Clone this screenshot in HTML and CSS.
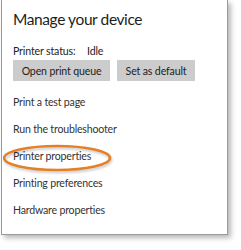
FILE: index.html
```html
<!DOCTYPE html>
<html>
<head>
<meta charset="utf-8">
<link rel="stylesheet" href="styles.css">
</head>
<body>
<div class="card">
  <h1 class="title">Manage your device</h1>
  <div class="status"><span class="status-label">Printer status:</span><span>Idle</span></div>
  <div class="buttons">
    <button class="btn btn-queue">Open print queue</button>
    <button class="btn btn-default">Set as default</button>
  </div>
  <ul class="links">
    <li>Print a test page</li>
    <li>Run the troubleshooter</li>
    <li>Printer properties</li>
    <li>Printing preferences</li>
    <li>Hardware properties</li>
  </ul>
  <svg class="highlight" width="112" height="30" viewBox="0 0 112 30">
    <ellipse cx="54" cy="14" rx="53" ry="12" fill="none" stroke="#e5802a" stroke-width="2.6"/>
  </svg>
</div>
</body>
</html>
```

FILE: styles.css
```css
html, body {
  margin: 0;
  padding: 0;
  background: #fff;
}
body {
  font-family: Lato, "Open Sans", sans-serif;
  color: #333;
  width: 241px;
  height: 250px;
  overflow: hidden;
}
.card {
  position: relative;
  margin-left: 1px;
  width: 227px;
  height: 235px;
  border: 1px solid #9a9a9a;
  border-top: none;
  box-shadow: 3px 3px 5px rgba(0, 0, 0, 0.28);
  background: #fff;
  padding: 9px 0 0 11px;
  box-sizing: border-box;
}
.title {
  margin: 0;
  font-size: 15.5px;
  font-weight: 400;
  line-height: 20px;
  color: #1e1e1e;
  letter-spacing: -0.4px;
}
.status {
  margin-top: 15px;
  font-size: 10.6px;
  line-height: 14px;
  color: #222;
  display: flex;
  letter-spacing: -0.15px;
}
.status-label {
  width: 74px;
}
.buttons {
  display: flex;
  gap: 7px;
  margin-top: 2px;
}
.btn {
  font-family: inherit;
  font-size: 10.6px;
  letter-spacing: -0.15px;
  color: #222;
  background: #cccccc;
  border: none;
  height: 21px;
  padding: 0;
  margin: 0;
}
.btn-queue { width: 97px; }
.btn-default { width: 78px; }
.links {
  list-style: none;
  margin: 8px 0 0;
  padding: 0;
  font-size: 10.6px;
  letter-spacing: -0.2px;
  color: #333;
}
.links li {
  line-height: 27px;
}
.highlight {
  position: absolute;
  left: 1px;
  top: 144px;
  filter: drop-shadow(1px 2px 1px rgba(0,0,0,0.2));
}
```
